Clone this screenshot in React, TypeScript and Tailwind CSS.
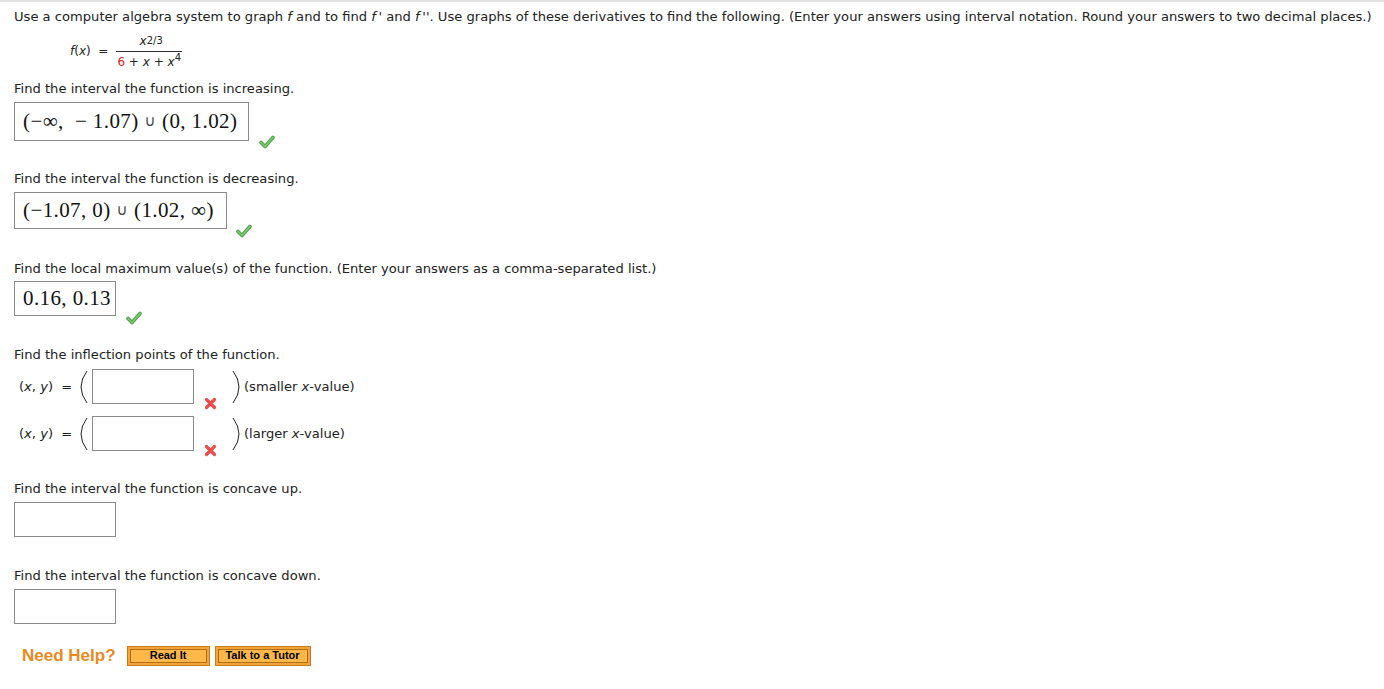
import React from "react";

const sans = "font-['Verdana','DejaVu_Sans',sans-serif]";
const math = "font-['Liberation_Serif','Times_New_Roman',serif]";

const Check = () => (
  <svg width="16" height="14" viewBox="0 0 16 14" className="shrink-0">
    <path d="M2 7.5 L6 11.5 L14 2.5" fill="none" stroke="#4fa24a" strokeWidth="3.6" strokeLinecap="round" strokeLinejoin="round" />
    <path d="M2 7.5 L6 11.5 L14 2.5" fill="none" stroke="#7ccb72" strokeWidth="1.6" strokeLinecap="round" strokeLinejoin="round" />
  </svg>
);

const Cross = () => (
  <svg width="13" height="13" viewBox="0 0 13 13" className="shrink-0">
    <path d="M2.5 2.5 L10.5 10.5 M10.5 2.5 L2.5 10.5" stroke="#ee4b4b" strokeWidth="3.2" strokeLinecap="round" />
  </svg>
);

const Paren = ({ right }: { right?: boolean }) => (
  <svg width="9" height="34" viewBox="0 0 9 34" className="shrink-0">
    {right ? (
      <path d="M2 1 Q8 9 8 17 Q8 25 2 33" fill="none" stroke="#222" strokeWidth="1" />
    ) : (
      <path d="M7 1 Q1 9 1 17 Q1 25 7 33" fill="none" stroke="#222" strokeWidth="1" />
    )}
  </svg>
);

const Cup = () => <span className={`${sans} text-[15px] text-[#444] mx-[6px]`}>∪</span>;

const AnswerBox = ({ children, w, h }: { children?: React.ReactNode; w: string; h: string }) => (
  <div className={`border border-[#8a8a8a] bg-white flex items-center px-[8px] ${w} ${h} ${math} text-[21px] tracking-[0.4px] text-[#111] whitespace-nowrap`}>
    {children}
  </div>
);

const Prompt = ({ children, mt }: { children: React.ReactNode; mt: string }) => (
  <div className={`${mt} leading-[16px]`}>{children}</div>
);

const HelpButton = ({ label, w }: { label: string; w: string }) => (
  <div className={`bg-[#f5a336] border border-[#c47d1e] p-[2px] ${w} h-[20px]`}>
    <div className="h-full border border-[#b06f17] bg-[#fdb849] flex items-center justify-center font-['Liberation_Sans',Arial,sans-serif] font-bold text-[11px] text-black leading-none">
      {label}
    </div>
  </div>
);

const InflectionRow = ({ label, mt }: { label: React.ReactNode; mt: string }) => (
  <div className={`flex items-center h-[35px] ${mt} pl-[5px]`}>
    <span className="w-[61px] text-[#222]">
      (<i>x</i>, <i>y</i>) &nbsp;=
    </span>
    <Paren />
    <div className="ml-[3px] w-[102px] h-[35px] border border-[#8a8a8a] bg-white" />
    <div className="ml-[10px] self-start mt-[28px] -mb-[6px]">
      <Cross />
    </div>
    <div className="ml-[14px]">
      <Paren right />
    </div>
    <span className="ml-[4px]">{label}</span>
  </div>
);

export default function App() {
  return (
    <div className={`min-h-screen bg-white border-t-2 border-[#e2e2e2] ${sans} text-[13.1px] text-[#222] pl-[14px] pt-[7px]`}>
      <div className="leading-[16px]">
        Use a computer algebra system to graph <i>f</i> and to find <i>f</i>&thinsp;' and <i>f</i>&thinsp;''. Use graphs of these derivatives to find the following. (Enter your answers using interval notation. Round your answers to two decimal places.)
      </div>

      <div className="flex items-center mt-[7px] ml-[56px] h-[38px]">
        <span className="text-[12px] mr-[8px]">
          <i>f</i>(<i>x</i>) &nbsp;=
        </span>
        <div className="flex flex-col items-stretch text-[12px]">
          <div className="text-center leading-[14px] pb-[3px] border-b border-[#333] pl-[4px]">
            <i>x</i>
            <sup className="text-[10px] relative -top-[1px]">2/3</sup>
          </div>
          <div className="leading-[14px] pt-[3px] px-[1px]">
            <span className="text-[#e0201c]">6</span> + <i>x</i> + <i>x</i>
            <sup className="text-[10px]">4</sup>
          </div>
        </div>
      </div>

      <Prompt mt="mt-[11px]">Find the interval the function is increasing.</Prompt>
      <div className="flex items-end mt-[5px]">
        <AnswerBox w="w-[235px]" h="h-[39px]">
          (−∞, &nbsp;− 1.07)<Cup />(0, 1.02)
        </AnswerBox>
        <div className="ml-[10px] -mb-[8px]">
          <Check />
        </div>
      </div>

      <Prompt mt="mt-[30px]">Find the interval the function is decreasing.</Prompt>
      <div className="flex items-end mt-[5px]">
        <AnswerBox w="w-[213px]" h="h-[37px]">
          (−1.07, 0)<Cup />(1.02, ∞)
        </AnswerBox>
        <div className="ml-[9px] -mb-[9px]">
          <Check />
        </div>
      </div>

      <Prompt mt="mt-[32px]">Find the local maximum value(s) of the function. (Enter your answers as a comma-separated list.)</Prompt>
      <div className="flex items-end mt-[4px]">
        <AnswerBox w="w-[102px]" h="h-[35px]">0.16, 0.13</AnswerBox>
        <div className="ml-[10px] -mb-[9px]">
          <Check />
        </div>
      </div>

      <Prompt mt="mt-[31px]">Find the inflection points of the function.</Prompt>
      <InflectionRow
        mt="mt-[6px]"
        label={
          <>
            (smaller <i>x</i>-value)
          </>
        }
      />
      <InflectionRow
        mt="mt-[12px]"
        label={
          <>
            (larger <i>x</i>-value)
          </>
        }
      />

      <Prompt mt="mt-[30px]">Find the interval the function is concave up.</Prompt>
      <div className="mt-[5px] w-[102px] h-[35px] border border-[#8a8a8a]" />

      <Prompt mt="mt-[31px]">Find the interval the function is concave down.</Prompt>
      <div className="mt-[5px] w-[102px] h-[35px] border border-[#8a8a8a]" />

      <div className="flex items-center mt-[19px] ml-[8px]">
        <span className="font-['Liberation_Sans',Arial,sans-serif] font-bold text-[17px] text-[#ea8a1e] mr-[11px]">Need Help?</span>
        <HelpButton label="Read It" w="w-[83px]" />
        <div className="ml-[5px]">
          <HelpButton label="Talk to a Tutor" w="w-[96px]" />
        </div>
      </div>
    </div>
  );
}
